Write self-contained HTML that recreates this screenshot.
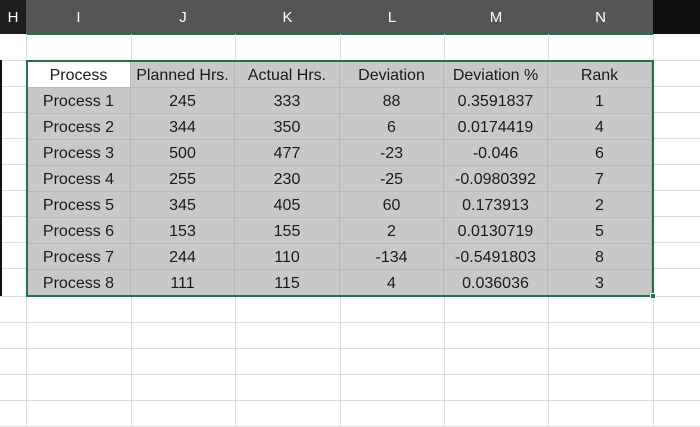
<!DOCTYPE html>
<html><head><style>
body{margin:0;width:700px;height:427px;overflow:hidden;background:#fff;font-family:"Liberation Sans",sans-serif;position:relative}
div{position:absolute;box-sizing:border-box}
.h{top:0;height:34px;background:#555;color:#fff;font-size:15px;line-height:36px;text-align:center}
.c{height:26px;line-height:28px;text-align:center;font-size:16px;color:#1a1a1a;background:#c8c8c8;border-right:1px solid #b8b8b8;border-bottom:1px solid #b8b8b8}
.vl{top:34px;width:1px;height:393px;background:#dcdcdc}
.hl{left:0;width:700px;height:1px;background:#dcdcdc}
</style></head><body>
<div class="h" style="left:0;width:26px;background:#1e1e1e">H</div>
<div class="h" style="left:26px;width:105px">I</div>
<div class="h" style="left:131px;width:104px">J</div>
<div class="h" style="left:235px;width:105px">K</div>
<div class="h" style="left:340px;width:104px">L</div>
<div class="h" style="left:444px;width:104px">M</div>
<div class="h" style="left:548px;width:105px">N</div>
<div class="h" style="left:653px;width:47px;background:#111"></div>
<div style="left:26px;top:33px;width:627px;height:2px;background:#217346"></div>
<div class="vl" style="left:26px"></div><div class="vl" style="left:131px"></div><div class="vl" style="left:235px"></div><div class="vl" style="left:340px"></div><div class="vl" style="left:444px"></div><div class="vl" style="left:548px"></div><div class="vl" style="left:653px"></div>
<div class="hl" style="top:60px"></div><div class="hl" style="top:86px"></div><div class="hl" style="top:112px"></div><div class="hl" style="top:138px"></div><div class="hl" style="top:164px"></div><div class="hl" style="top:190px"></div><div class="hl" style="top:216px"></div><div class="hl" style="top:242px"></div><div class="hl" style="top:268px"></div><div class="hl" style="top:296px"></div><div class="hl" style="top:322px"></div><div class="hl" style="top:348px"></div><div class="hl" style="top:374px"></div><div class="hl" style="top:400px"></div><div class="hl" style="top:426px"></div>
<div style="left:0;top:60px;width:2px;height:236px;background:#111"></div>
<div id="t" style="left:0;top:0;width:0;height:0"></div>
<script>
var cols=[[27,104],[131,104],[235,105],[340,104],[444,104],[548,104]];
var d=[["Process","Planned Hrs.","Actual Hrs.","Deviation","Deviation %","Rank"],
["Process 1","245","333","88","0.3591837","1"],["Process 2","344","350","6","0.0174419","4"],
["Process 3","500","477","-23","-0.046","6"],["Process 4","255","230","-25","-0.0980392","7"],
["Process 5","345","405","60","0.173913","2"],["Process 6","153","155","2","0.0130719","5"],
["Process 7","244","110","-134","-0.5491803","8"],["Process 8","111","115","4","0.036036","3"]];
var h="";
for(var r=0;r<9;r++)for(var c=0;c<6;c++){
var bg=(r==0&&c==0)?"background:#fff;":"";
h+='<div class="c" style="left:'+cols[c][0]+'px;top:'+(62+r*26)+'px;width:'+cols[c][1]+'px;'+bg+'">'+d[r][c]+'</div>';}
h+='<div style="left:26px;top:60px;width:628px;height:237px;border:2px solid #217346"></div>';
h+='<div style="left:650px;top:293px;width:6px;height:6px;background:#217346;border:1px solid #fff"></div>';
document.body.insertAdjacentHTML("beforeend",h);
</script>
</body></html>
